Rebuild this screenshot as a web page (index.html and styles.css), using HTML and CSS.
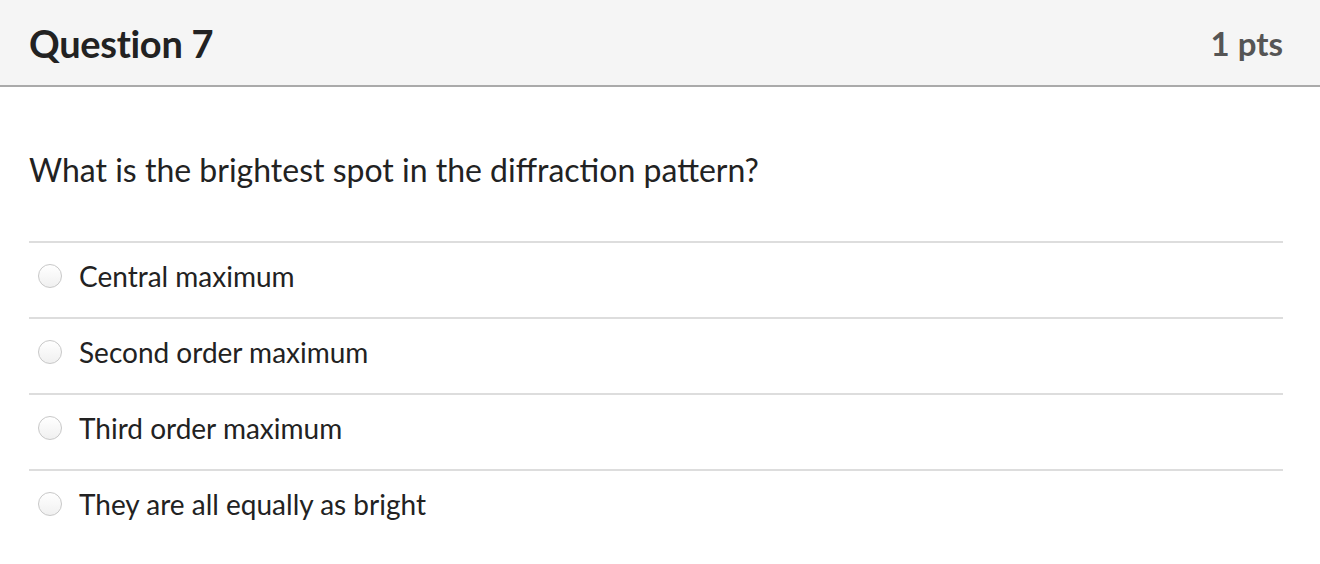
FILE: index.html
```html
<!DOCTYPE html>
<html>
<head>
<meta charset="utf-8">
<link rel="stylesheet" href="styles.css">
</head>
<body>
<div class="question">
  <div class="header">
    <h2 class="title">Question 7</h2>
    <div class="points">1 pts</div>
  </div>
  <div class="content">
    <p class="prompt">What is the brightest spot in the diffraction pattern?</p>
    <div class="answers">
      <label class="answer"><span class="radio"></span><span class="label">Central maximum</span></label>
      <label class="answer"><span class="radio"></span><span class="label">Second order maximum</span></label>
      <label class="answer"><span class="radio"></span><span class="label">Third order maximum</span></label>
      <label class="answer"><span class="radio"></span><span class="label">They are all equally as bright</span></label>
    </div>
  </div>
</div>
</body>
</html>
```
FILE: styles.css
```css
html, body {
  margin: 0;
  padding: 0;
  background: #fff;
}
body {
  font-family: Lato, "Noto Sans", sans-serif;
  color: #2d3b45;
}
.header {
  height: 85px;
  background: #f5f5f5;
  border-bottom: 2px solid #aaaaaa;
  display: flex;
  align-items: center;
  justify-content: space-between;
  padding: 0 37px 0 29px;
}
.title {
  margin: 0;
  font-size: 38px;
  font-weight: 700;
  color: #222;
  letter-spacing: -0.3px;
}
.points {
  font-size: 33px;
  font-weight: 700;
  color: #555;
}
.content {
  padding: 0 37px 0 29px;
}
.prompt {
  margin: 0;
  padding-top: 63px;
  height: 91px;
  font-size: 32px;
  line-height: 40px;
  color: #222;
}
.answers {
  display: flex;
  flex-direction: column;
}
.answer {
  display: flex;
  align-items: center;
  height: 66px;
  padding-bottom: 8px;
  border-top: 2px solid #dddddd;
}
.radio {
  width: 22px;
  height: 22px;
  border-radius: 50%;
  border: 1px solid #c8c8c8;
  background: linear-gradient(#ffffff, #f0f0f0);
  margin-left: 9px;
  margin-right: 17px;
  flex: none;
}
.label {
  font-size: 28px;
  color: #222;
}
```
